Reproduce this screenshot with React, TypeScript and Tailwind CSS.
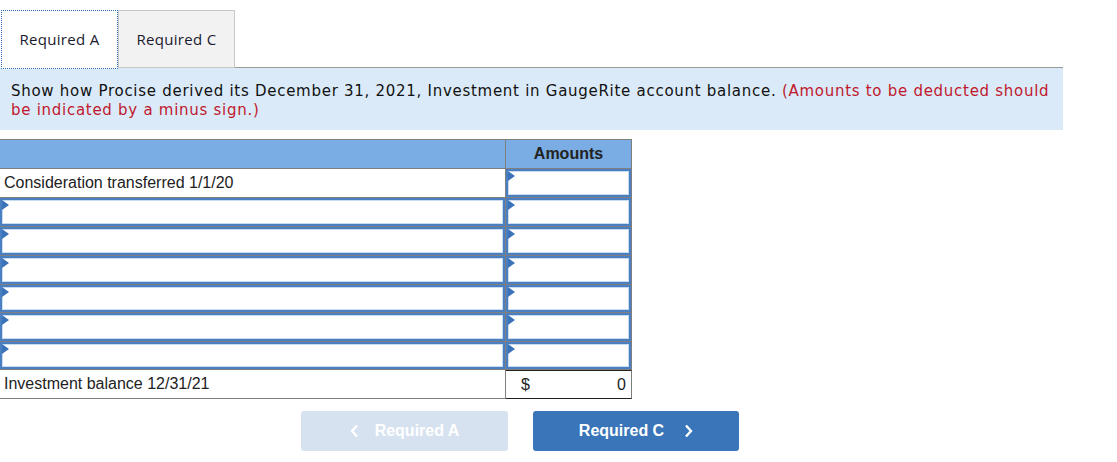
import React from 'react';

const Marker = () => (
  <span className="absolute left-0 top-0 w-0 h-0 border-t-[5px] border-b-[5px] border-l-[7px] border-t-transparent border-b-transparent border-l-[#3b73b9]" />
);

const InputBox = () => (
  <div className="relative h-full w-full bg-white border-2 border-[#4a7fc1] shadow-[inset_0_0_0_1px_#c9dbf0]">
    <Marker />
  </div>
);

export default function App() {
  // heights of the six blank entry rows, as in the reference
  const emptyRows = [
    { id: 1, h: 'h-[29px]' },
    { id: 2, h: 'h-[29px]' },
    { id: 3, h: 'h-[29px]' },
    { id: 4, h: 'h-[28px]' },
    { id: 5, h: 'h-[29px]' },
    { id: 6, h: 'h-[28px]' },
  ];

  return (
    <div className="w-[1117px] h-[462px] bg-white pt-[9px]">
      {/* Tabs */}
      <div className="flex items-end h-[59px] font-['Open_Sans',sans-serif] text-[15px] tracking-[0.3px] text-[#1a1a2e]">
        <div className="w-[117px] h-[59px] ml-px bg-white border border-dotted border-[#2f6ab5] flex items-center justify-center relative z-10 -mb-px">
          Required A
        </div>
        <div className="w-[117px] h-[58px] bg-[#f2f2f2] border border-[#c8c8c8] flex items-center justify-center">
          Required C
        </div>
        <div className="w-[828px] border-b border-[#999]" />
      </div>

      {/* Instructions */}
      <div className="w-[1063px] bg-[#daeaf8] px-[11px] pt-[14px] pb-[10px] font-['DejaVu_Sans',Verdana,sans-serif] text-[15px] leading-[19px] tracking-[0.72px] text-[#111]">
        Show how Procise derived its December 31, 2021, Investment in GaugeRite account balance.{' '}
        <span className="text-[#c0192e]">(Amounts to be deducted should be indicated by a minus sign.)</span>
      </div>

      {/* Table */}
      <div className="mt-[9px] w-[632px] border-t border-[#7f7f7f] font-['Liberation_Sans',Arial,sans-serif] text-[16px] text-[#222]">
        <div className="flex h-[29px] bg-[#7aade3] border-b border-[#7f7f7f]">
          <div className="w-[506px] border-r border-[#7f7f7f]" />
          <div className="flex-1 border-r border-[#7f7f7f] flex items-center justify-center font-bold text-[#222]">
            Amounts
          </div>
        </div>

        <div className="flex h-[29px] border-b border-[#7f7f7f]">
          <div className="w-[506px] border-r border-[#7f7f7f] flex items-center pl-[4px]">
            Consideration transferred 1/1/20
          </div>
          <div className="flex-1 border-r border-[#7f7f7f]">
            <InputBox />
          </div>
        </div>

        {emptyRows.map((r) => (
          <div key={r.id} className={`flex ${r.h} border-b border-[#7f7f7f]`}>
            <div className="w-[506px] border-r border-[#7f7f7f]">
              <InputBox />
            </div>
            <div className="flex-1 border-r border-[#7f7f7f]">
              <InputBox />
            </div>
          </div>
        ))}

        <div className="flex h-[29px] border-b border-[#7f7f7f]">
          <div className="w-[506px] border-r border-[#7f7f7f] flex items-center pl-[4px]">
            Investment balance 12/31/21
          </div>
          <div className="flex-1 border-r border-[#7f7f7f] border-t border-t-[#222] border-b border-b-[#222] -mb-px flex items-center justify-between pl-[15px] pr-[5px]">
            <span>$</span>
            <span>0</span>
          </div>
        </div>
      </div>

      {/* Nav buttons */}
      <div className="flex gap-[25px] pl-[301px] mt-[12px] font-['Liberation_Sans',Arial,sans-serif] text-[16px] font-bold text-white">
        <button className="w-[207px] h-[40px] rounded-[3px] bg-[#d7e2f1] flex items-center justify-center gap-[16px]">
          <svg width="9" height="14" viewBox="0 0 9 14" fill="none" stroke="white" strokeWidth="2.4">
            <path d="M7 1.5 L2 7 L7 12.5" />
          </svg>
          <span>Required A</span>
        </button>
        <button className="w-[206px] h-[40px] rounded-[3px] bg-[#3a75b9] flex items-center justify-center gap-[20px]">
          <span>Required C</span>
          <svg width="9" height="14" viewBox="0 0 9 14" fill="none" stroke="white" strokeWidth="2.4">
            <path d="M2 1.5 L7 7 L2 12.5" />
          </svg>
        </button>
      </div>
    </div>
  );
}
